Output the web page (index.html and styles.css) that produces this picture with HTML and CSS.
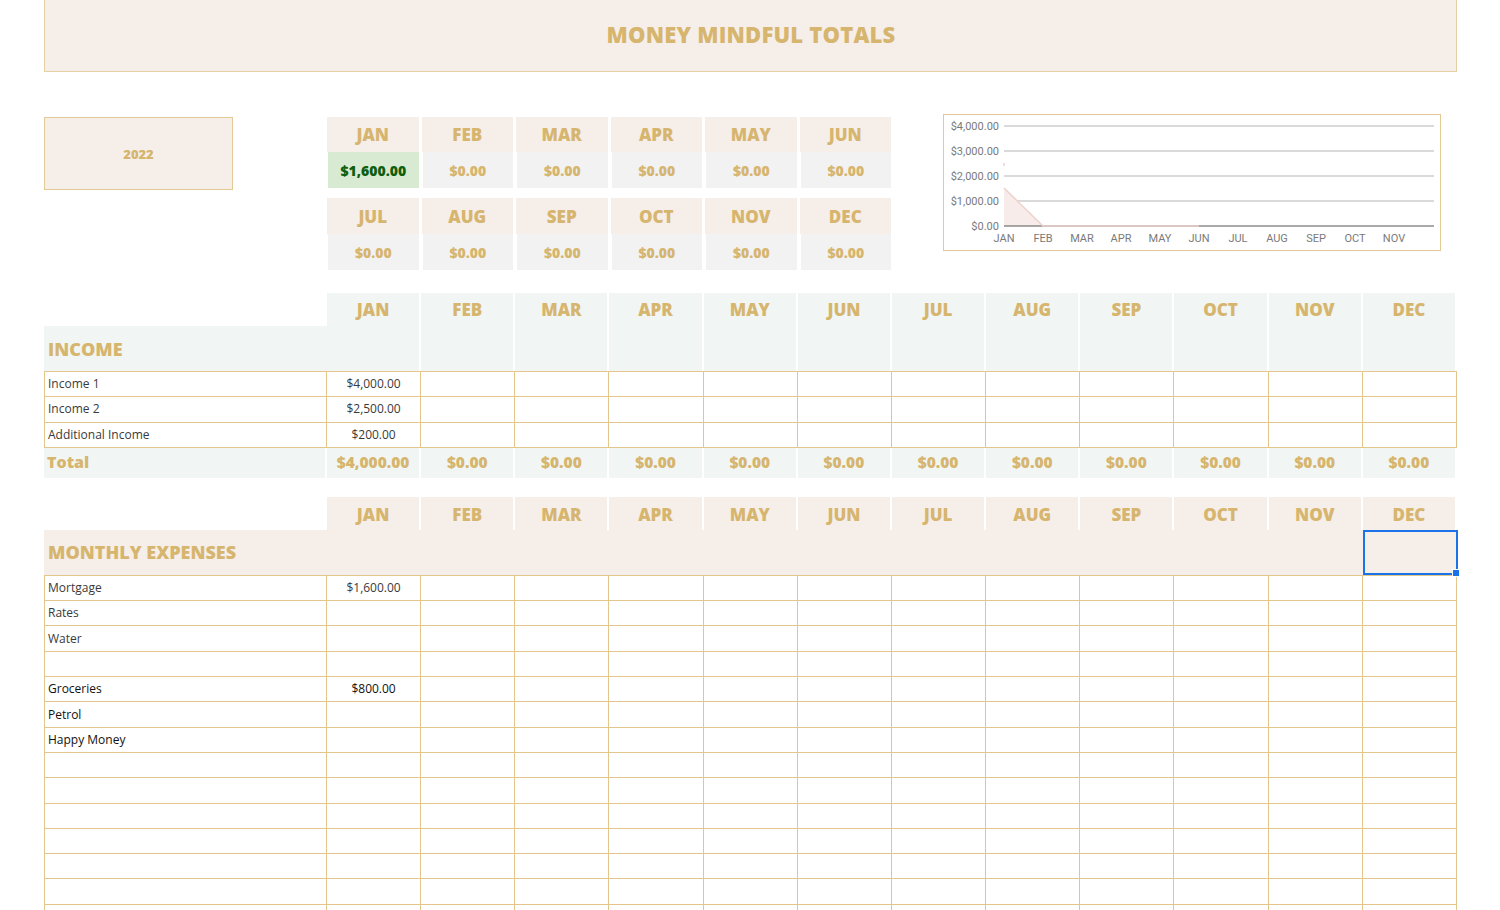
FILE: index.html
```html
<!DOCTYPE html>
<html>
<head>
<meta charset="utf-8">
<title>Money Mindful Totals</title>
<link rel="stylesheet" href="styles.css">
</head>
<body>
<div class="page">
  <header class="title-box"><h1>MONEY MINDFUL TOTALS</h1></header>

  <section class="top">
    <div class="year">2022</div>
    <div class="mini">
      <div class="mh">JAN</div><div class="mh">FEB</div><div class="mh">MAR</div><div class="mh">APR</div><div class="mh">MAY</div><div class="mh">JUN</div>
      <div class="mv pos">$1,600.00</div><div class="mv">$0.00</div><div class="mv">$0.00</div><div class="mv">$0.00</div><div class="mv">$0.00</div><div class="mv">$0.00</div>
      <div class="mh gap">JUL</div><div class="mh gap">AUG</div><div class="mh gap">SEP</div><div class="mh gap">OCT</div><div class="mh gap">NOV</div><div class="mh gap">DEC</div>
      <div class="mv">$0.00</div><div class="mv">$0.00</div><div class="mv">$0.00</div><div class="mv">$0.00</div><div class="mv">$0.00</div><div class="mv">$0.00</div>
    </div>
    <div class="chart">
      <svg width="498" height="136" viewBox="0 0 498 136">
        <g class="grid">
          <line x1="61" y1="12" x2="491" y2="12"/>
          <line x1="61" y1="37" x2="491" y2="37"/>
          <line x1="61" y1="62" x2="491" y2="62"/>
          <line x1="61" y1="87" x2="491" y2="87"/>
        </g>
        <polygon points="61,74 100,112 61,112" fill="#f7ecea"/>
        <line x1="61" y1="112" x2="491" y2="112" stroke="#555" stroke-width="1"/>
        <polyline points="61,74 100,112 256,112" fill="none" stroke="#ecd2cd" stroke-width="1.5"/>
        <line x1="61" y1="49" x2="61" y2="52" stroke="#ecd2cd" stroke-width="1.5"/>
        <g class="ylab">
          <text x="56" y="16">$4,000.00</text>
          <text x="56" y="41">$3,000.00</text>
          <text x="56" y="66">$2,000.00</text>
          <text x="56" y="91">$1,000.00</text>
          <text x="56" y="116">$0.00</text>
        </g>
        <g class="xlab">
          <text x="61" y="128">JAN</text>
          <text x="100" y="128">FEB</text>
          <text x="139" y="128">MAR</text>
          <text x="178" y="128">APR</text>
          <text x="217" y="128">MAY</text>
          <text x="256" y="128">JUN</text>
          <text x="295" y="128">JUL</text>
          <text x="334" y="128">AUG</text>
          <text x="373" y="128">SEP</text>
          <text x="412" y="128">OCT</text>
          <text x="451" y="128">NOV</text>
        </g>
      </svg>
    </div>
  </section>

  <section class="table income">
    <div class="hrow">
      <div class="blank"></div>
      <div>JAN</div><div>FEB</div><div>MAR</div><div>APR</div><div>MAY</div><div>JUN</div><div>JUL</div><div>AUG</div><div>SEP</div><div>OCT</div><div>NOV</div><div>DEC</div>
    </div>
    <div class="srow">
      <div class="sname">INCOME</div>
      <div></div><div></div><div></div><div></div><div></div><div></div><div></div><div></div><div></div><div></div><div></div><div></div>
    </div>
    <div class="rows">
      <div class="row"><div>Income 1</div><div>$4,000.00</div><div></div><div></div><div></div><div></div><div></div><div></div><div></div><div></div><div></div><div></div><div></div></div>
      <div class="row"><div>Income 2</div><div>$2,500.00</div><div></div><div></div><div></div><div></div><div></div><div></div><div></div><div></div><div></div><div></div><div></div></div>
      <div class="row"><div>Additional Income</div><div>$200.00</div><div></div><div></div><div></div><div></div><div></div><div></div><div></div><div></div><div></div><div></div><div></div></div>
    </div>
    <div class="trow">
      <div class="tname">Total</div>
      <div>$4,000.00</div><div>$0.00</div><div>$0.00</div><div>$0.00</div><div>$0.00</div><div>$0.00</div><div>$0.00</div><div>$0.00</div><div>$0.00</div><div>$0.00</div><div>$0.00</div><div>$0.00</div>
    </div>
  </section>

  <section class="table expenses">
    <div class="hrow">
      <div class="blank"></div>
      <div>JAN</div><div>FEB</div><div>MAR</div><div>APR</div><div>MAY</div><div>JUN</div><div>JUL</div><div>AUG</div><div>SEP</div><div>OCT</div><div>NOV</div><div>DEC</div>
    </div>
    <div class="srow">
      <div class="sname">MONTHLY EXPENSES</div>
      <div></div><div></div><div></div><div></div><div></div><div></div><div></div><div></div><div></div><div></div><div></div><div class="selected"></div>
    </div>
    <div class="rows">
      <div class="row"><div>Mortgage</div><div>$1,600.00</div><div></div><div></div><div></div><div></div><div></div><div></div><div></div><div></div><div></div><div></div><div></div></div>
      <div class="row"><div>Rates</div><div></div><div></div><div></div><div></div><div></div><div></div><div></div><div></div><div></div><div></div><div></div><div></div></div>
      <div class="row"><div>Water</div><div></div><div></div><div></div><div></div><div></div><div></div><div></div><div></div><div></div><div></div><div></div><div></div></div>
      <div class="row"><div></div><div></div><div></div><div></div><div></div><div></div><div></div><div></div><div></div><div></div><div></div><div></div><div></div></div>
      <div class="row dark"><div>Groceries</div><div>$800.00</div><div></div><div></div><div></div><div></div><div></div><div></div><div></div><div></div><div></div><div></div><div></div></div>
      <div class="row dark"><div>Petrol</div><div></div><div></div><div></div><div></div><div></div><div></div><div></div><div></div><div></div><div></div><div></div><div></div></div>
      <div class="row dark"><div>Happy Money</div><div></div><div></div><div></div><div></div><div></div><div></div><div></div><div></div><div></div><div></div><div></div><div></div></div>
      <div class="row"><div></div><div></div><div></div><div></div><div></div><div></div><div></div><div></div><div></div><div></div><div></div><div></div><div></div></div>
      <div class="row"><div></div><div></div><div></div><div></div><div></div><div></div><div></div><div></div><div></div><div></div><div></div><div></div><div></div></div>
      <div class="row"><div></div><div></div><div></div><div></div><div></div><div></div><div></div><div></div><div></div><div></div><div></div><div></div><div></div></div>
      <div class="row"><div></div><div></div><div></div><div></div><div></div><div></div><div></div><div></div><div></div><div></div><div></div><div></div><div></div></div>
      <div class="row"><div></div><div></div><div></div><div></div><div></div><div></div><div></div><div></div><div></div><div></div><div></div><div></div><div></div></div>
      <div class="row"><div></div><div></div><div></div><div></div><div></div><div></div><div></div><div></div><div></div><div></div><div></div><div></div><div></div></div>
      <div class="row"><div></div><div></div><div></div><div></div><div></div><div></div><div></div><div></div><div></div><div></div><div></div><div></div><div></div></div>
    </div>
  </section>
</div>
</body>
</html>
```

FILE: styles.css
```css
* { box-sizing: border-box; }
html, body { margin: 0; padding: 0; background: #fff; }
body {
  font-family: "Open Sans", "Liberation Sans", sans-serif;
  color: #333;
  overflow: hidden;
  height: 910px;
}
.page {
  margin-left: 44px;
  width: 1413px;
}
.title-box {
  height: 72px;
  background: #f6eee8;
  border: 1px solid #e5d0a3;
  border-top: 0;
  display: flex;
  align-items: center;
  justify-content: center;
  padding-bottom: 3px;
}
.title-box h1 {
  margin: 0;
  font-size: 22px;
  font-weight: 800;
  color: #d6b56f;
  letter-spacing: 0.2px;
  padding-left: 1px;
}

/* top section */
.top {
  margin-top: 42px;
  height: 179px;
  display: grid;
  grid-template-columns: 283px repeat(12, 1fr);
  align-items: start;
}
.year {
  grid-column: 1;
  margin-top: 3px;
  width: 189px;
  height: 73px;
  background: #f6eee8;
  border: 1px solid #e3c994;
  display: flex;
  align-items: center;
  justify-content: center;
  font-size: 13px;
  font-weight: 800;
  color: #d6b56f;
}
.mini {
  grid-column: 2 / span 6;
  margin-top: 3px;
  margin-right: -2px;
  display: grid;
  grid-template-columns: repeat(6, 1fr);
  grid-template-rows: 35px 36px 46px 36px;
}
.mh, .mv {
  display: flex;
  align-items: center;
  justify-content: center;
  font-weight: 800;
  color: #d6b56f;
  border-right: 3px solid #fff;
}
.mh { background: #f6eee8; font-size: 17px; }
.mh.gap { border-top: 10px solid #fff; background-clip: padding-box; }
.mv { background: #f2f2f2; font-size: 14px; border-left: 1px solid #fff; }
.mv.pos { background: #d9ead3; color: #0d5e0d; }
.chart {
  grid-column: 8 / span 6;
  margin-left: 51px;
  margin-right: 16px;
  height: 137px;
  border: 1px solid #e3c994;
  background: #fff;
  position: relative;
}
.chart svg { display: block; position: absolute; left: -1px; top: -1px; }
.grid line { stroke: #b5b5b5; stroke-width: 1; }
.ylab text {
  font-family: Roboto, "Liberation Sans", sans-serif;
  font-size: 11px;
  fill: #7a7a7a;
  text-anchor: end;
}
.xlab text {
  font-family: Roboto, "Liberation Sans", sans-serif;
  font-size: 11px;
  fill: #7a7a7a;
  text-anchor: middle;
}

/* tables */
.expenses { margin-top: 19px; }
.hrow, .srow, .row, .trow {
  display: grid;
  grid-template-columns: 283px repeat(12, 1fr);
}
.hrow { height: 33px; }
.hrow > div {
  display: flex;
  align-items: center;
  justify-content: center;
  font-size: 17px;
  font-weight: 800;
  color: #d6b56f;
  border-right: 2px solid #fff;
  padding-bottom: 1px;
}
.expenses .hrow > div { padding-bottom: 0; padding-top: 3px; }
.hrow > .blank { background: #fff; border-right: 0; }
.srow { height: 45px; }
.srow > .sname {
  display: flex;
  align-items: center;
  padding-left: 4px;
  font-size: 18px;
  font-weight: 800;
  color: #d6b56f;
}
.income .hrow > div:not(.blank),
.income .srow > div { background: #f1f5f3; }
.income .srow > div:not(.sname) { border-right: 2px solid #fff; }
.expenses .hrow > div:not(.blank),
.expenses .srow > div { background: #f6eee8; }
.srow > .selected {
  position: relative;
  border: 2px solid #1a73e8;
  margin-right: -1px;
}
.srow > .selected::after {
  content: "";
  position: absolute;
  right: -4px;
  bottom: -4px;
  width: 6px;
  height: 6px;
  background: #1a73e8;
  border: 1px solid #fff;
}
.rows { border-top: 1px solid #e2c68c; }
.row { height: 25.3px; }
.row > div {
  border-right: 1px solid #e2c68c;
  border-bottom: 1px solid #e2c68c;
  display: flex;
  align-items: center;
  justify-content: center;
  font-size: 12px;
  color: #3a3a3a;
  padding-bottom: 1px;
}
.row > div:first-child {
  border-left: 1px solid #e2c68c;
  justify-content: flex-start;
  padding-left: 3px;
}
.row.dark > div { color: #111; }
.trow { height: 30px; }
.trow > div {
  background: #f1f5f3;
  border-right: 2px solid #fff;
  display: flex;
  align-items: center;
  justify-content: center;
  font-size: 15.5px;
  font-weight: 800;
  color: #d6b56f;
  padding-bottom: 2px;
}
.trow > .tname {
  justify-content: flex-start;
  padding-left: 3px;
  font-size: 16px;
}
```
